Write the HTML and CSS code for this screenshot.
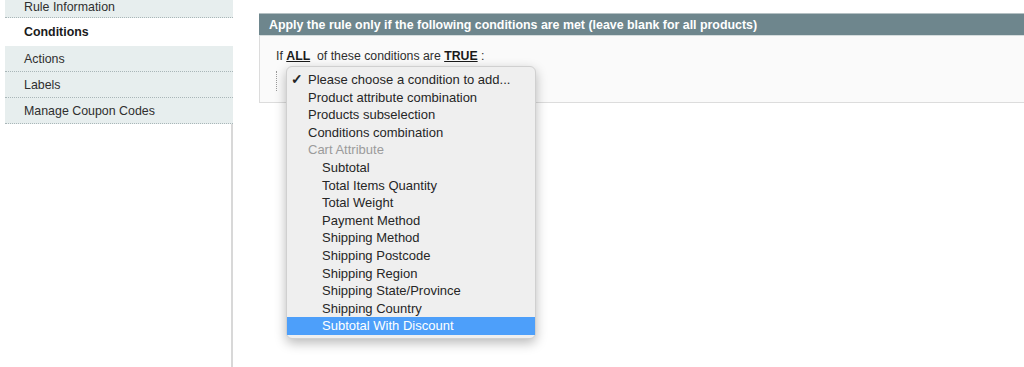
FILE: index.html
```html
<!DOCTYPE html>
<html>
<head>
<meta charset="utf-8">
<link rel="stylesheet" href="styles.css">
</head>
<body>
<div class="page">
  <aside class="sidebar">
    <ul class="tabs">
      <li class="tab tab-first">Rule Information</li>
      <li class="tab tab-active">Conditions</li>
      <li class="tab">Actions</li>
      <li class="tab">Labels</li>
      <li class="tab">Manage Coupon Codes</li>
    </ul>
    <div class="sidebar-fill"></div>
  </aside>
  <main class="main">
    <section class="fieldset">
      <div class="fieldset-head">Apply the rule only if the following conditions are met (leave blank for all products)</div>
      <div class="fieldset-body">
        <p class="rule-line">If <b class="lnk">ALL</b>&nbsp; of these conditions are <b class="lnk">TRUE</b> :</p>
        <div class="rule-child"><span class="dots"></span></div>
        <div class="menu">
          <div class="opt"><span class="check">✓</span>Please choose a condition to add...</div>
          <div class="opt">Product attribute combination</div>
          <div class="opt">Products subselection</div>
          <div class="opt">Conditions combination</div>
          <div class="opt opt-group">Cart Attribute</div>
          <div class="opt opt-sub">Subtotal</div>
          <div class="opt opt-sub">Total Items Quantity</div>
          <div class="opt opt-sub">Total Weight</div>
          <div class="opt opt-sub">Payment Method</div>
          <div class="opt opt-sub">Shipping Method</div>
          <div class="opt opt-sub">Shipping Postcode</div>
          <div class="opt opt-sub">Shipping Region</div>
          <div class="opt opt-sub">Shipping State/Province</div>
          <div class="opt opt-sub">Shipping Country</div>
          <div class="opt opt-sub opt-hl">Subtotal With Discount</div>
        </div>
      </div>
    </section>
  </main>
</div>
</body>
</html>
```

FILE: styles.css
```css
html, body {
  margin: 0;
  padding: 0;
  background: #ffffff;
  font-family: "Liberation Sans", Arial, sans-serif;
  color: #2f2f2f;
  overflow: hidden;
}
.page {
  display: flex;
  height: 367px;
}
.sidebar {
  width: 228px;
  margin-left: 5px;
  display: flex;
  flex-direction: column;
}
.tabs {
  list-style: none;
  margin: 0;
  padding: 0;
}
.tab {
  height: 25px;
  line-height: 27px;
  padding-left: 19px;
  font-size: 12.4px;
  color: #2f2f2f;
  background: #e7eeee;
  border-bottom: 1px dotted #a9b6b8;
}
.tab-first {
  height: 17px;
  line-height: 15px;
}
.tab-active {
  height: 28px;
  line-height: 29px;
  background: #ffffff;
  border-bottom: 0;
  font-weight: bold;
  color: #1a1a1a;
}
.sidebar-fill {
  flex: 1;
  border-right: 2px solid #d8d8d8;
}
.main {
  flex: 1;
  padding-left: 26px;
  padding-top: 13px;
}
.fieldset {
  position: relative;
}
.fieldset-head {
  height: 21px;
  line-height: 22px;
  background: #6e868d;
  border-top: 1px solid #b4c0c3;
  border-bottom: 1px solid #d5dcdd;
  padding-left: 10px;
  color: #ffffff;
  font-size: 12.4px;
  font-weight: bold;
}
.fieldset-body {
  height: 66px;
  background: #fafafa;
  border-left: 1px solid #dcdcdc;
  border-bottom: 1px solid #dcdcdc;
  padding-left: 16px;
  position: relative;
}
.rule-line {
  margin: 0;
  padding-top: 13px;
  font-size: 12.3px;
  line-height: 15px;
  color: #2f2f2f;
}
.lnk {
  text-decoration: underline;
  color: #1a1a1a;
}
.rule-child {
  padding-top: 7px;
}
.dots {
  display: block;
  width: 0;
  height: 20px;
  border-left: 1px dotted #9a9a9a;
}
.menu {
  position: absolute;
  left: 26px;
  top: 30px;
  width: 248px;
  padding: 4px 0 3px;
  background: #efefef;
  border: 1px solid #d0d0d0;
  border-radius: 6px;
  box-shadow: 0 4px 12px rgba(0, 0, 0, 0.28);
  font-size: 13px;
  color: #262626;
}
.opt {
  height: 17.6px;
  line-height: 17.6px;
  padding-left: 21px;
  position: relative;
  white-space: nowrap;
}
.check {
  position: absolute;
  left: 4px;
  top: 0;
  font-size: 14px;
  font-weight: bold;
}
.opt-group {
  color: #9b9b9b;
}
.opt-sub {
  padding-left: 35px;
}
.opt-hl {
  background: #4d9ffa;
  color: #ffffff;
}
```
